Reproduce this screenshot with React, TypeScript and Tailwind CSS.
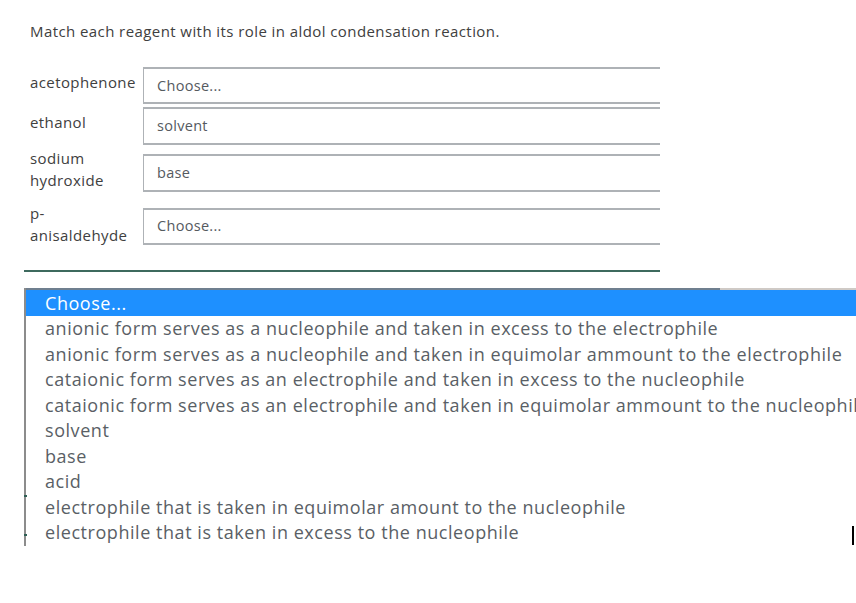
import React from "react";

const rows = [
  { label: ["acetophenone"], value: "Choose...", row: "h-[37px]", box: "h-[37px]", lift: "mb-[7px]" },
  { label: ["ethanol"], value: "solvent", row: "h-[38px] mt-[3px]", box: "h-[38px]", lift: "mb-2" },
  { label: ["sodium", "hydroxide"], value: "base", row: "h-[52px] mt-[2px]", box: "h-[38px]", lift: "mb-2" },
  { label: ["p-", "anisaldehyde"], value: "Choose...", row: "h-[48px] mt-[3px]", box: "h-[37px]", lift: "mb-1" },
];

const options = [
  "anionic form serves as a nucleophile and taken in excess to the electrophile",
  "anionic form serves as a nucleophile and taken in equimolar ammount to the electrophile",
  "cataionic form serves as an electrophile and taken in excess to the nucleophile",
  "cataionic form serves as an electrophile and taken in equimolar ammount to the nucleophile",
  "solvent",
  "base",
  "acid",
  "electrophile that is taken in equimolar amount to the nucleophile",
  "electrophile that is taken in excess to the nucleophile",
];

export default function App() {
  return (
    <div className="relative w-[856px] h-[603px] overflow-hidden bg-white font-['Open_Sans',sans-serif]">
      <div className="pl-[30px] pt-[21px] text-[15px] leading-5 tracking-[0.42px] text-[#404040]">
        Match each reagent with its role in aldol condensation reaction.
      </div>

      <div className="mt-[26px] flex flex-col">
        {rows.map((r, i) => (
          <div key={i} className={`flex items-center ${r.row}`}>
            <div className={`w-[113px] pl-[30px] box-content text-[15px] leading-[22px] tracking-[0.4px] text-[#404040] ${r.lift}`}>
              {r.label.map((l) => (
                <div key={l}>{l}</div>
              ))}
            </div>
            <div
              className={`flex w-[517px] items-center border border-t-2 border-b-2 border-[#aeb2b6] border-r-0 pl-[13px] text-[14.5px] tracking-[0.3px] text-[#555a5f] ${r.box}`}
            >
              {r.value}
            </div>
          </div>
        ))}
      </div>

      <div className="ml-[24px] mt-[20px] h-[2px] w-[636px] bg-[#3e6a5e]" />

      <div className="ml-[24px] mt-[16px] w-[850px] border-l-2 border-[#8c8c8c]">
        <div className="flex h-[2px]">
          <div className="w-[694px] bg-[#6f7f8f]" />
          <div className="flex-1 bg-[#cfcac6]" />
        </div>
        <div className="h-[26px] bg-[#1e90ff] pl-[19px] text-[18px] leading-[26px] tracking-[0.55px] text-white">Choose...</div>
        {options.map((o) => (
          <div key={o} className="h-[25.5px] whitespace-nowrap pl-[19px] text-[18px] leading-[25.5px] tracking-[0.55px] text-[#5a5f66]">
            {o}
          </div>
        ))}
      </div>

      <div className="absolute left-[24px] top-[495px] h-[2px] w-[3px] bg-[#2f5f55]" />
      <div className="absolute left-[24px] top-[534px] h-[2px] w-[3px] bg-[#2f5f55]" />
      <div className="absolute left-[852px] top-[526px] h-[19px] w-[2px] bg-black" />
    </div>
  );
}
